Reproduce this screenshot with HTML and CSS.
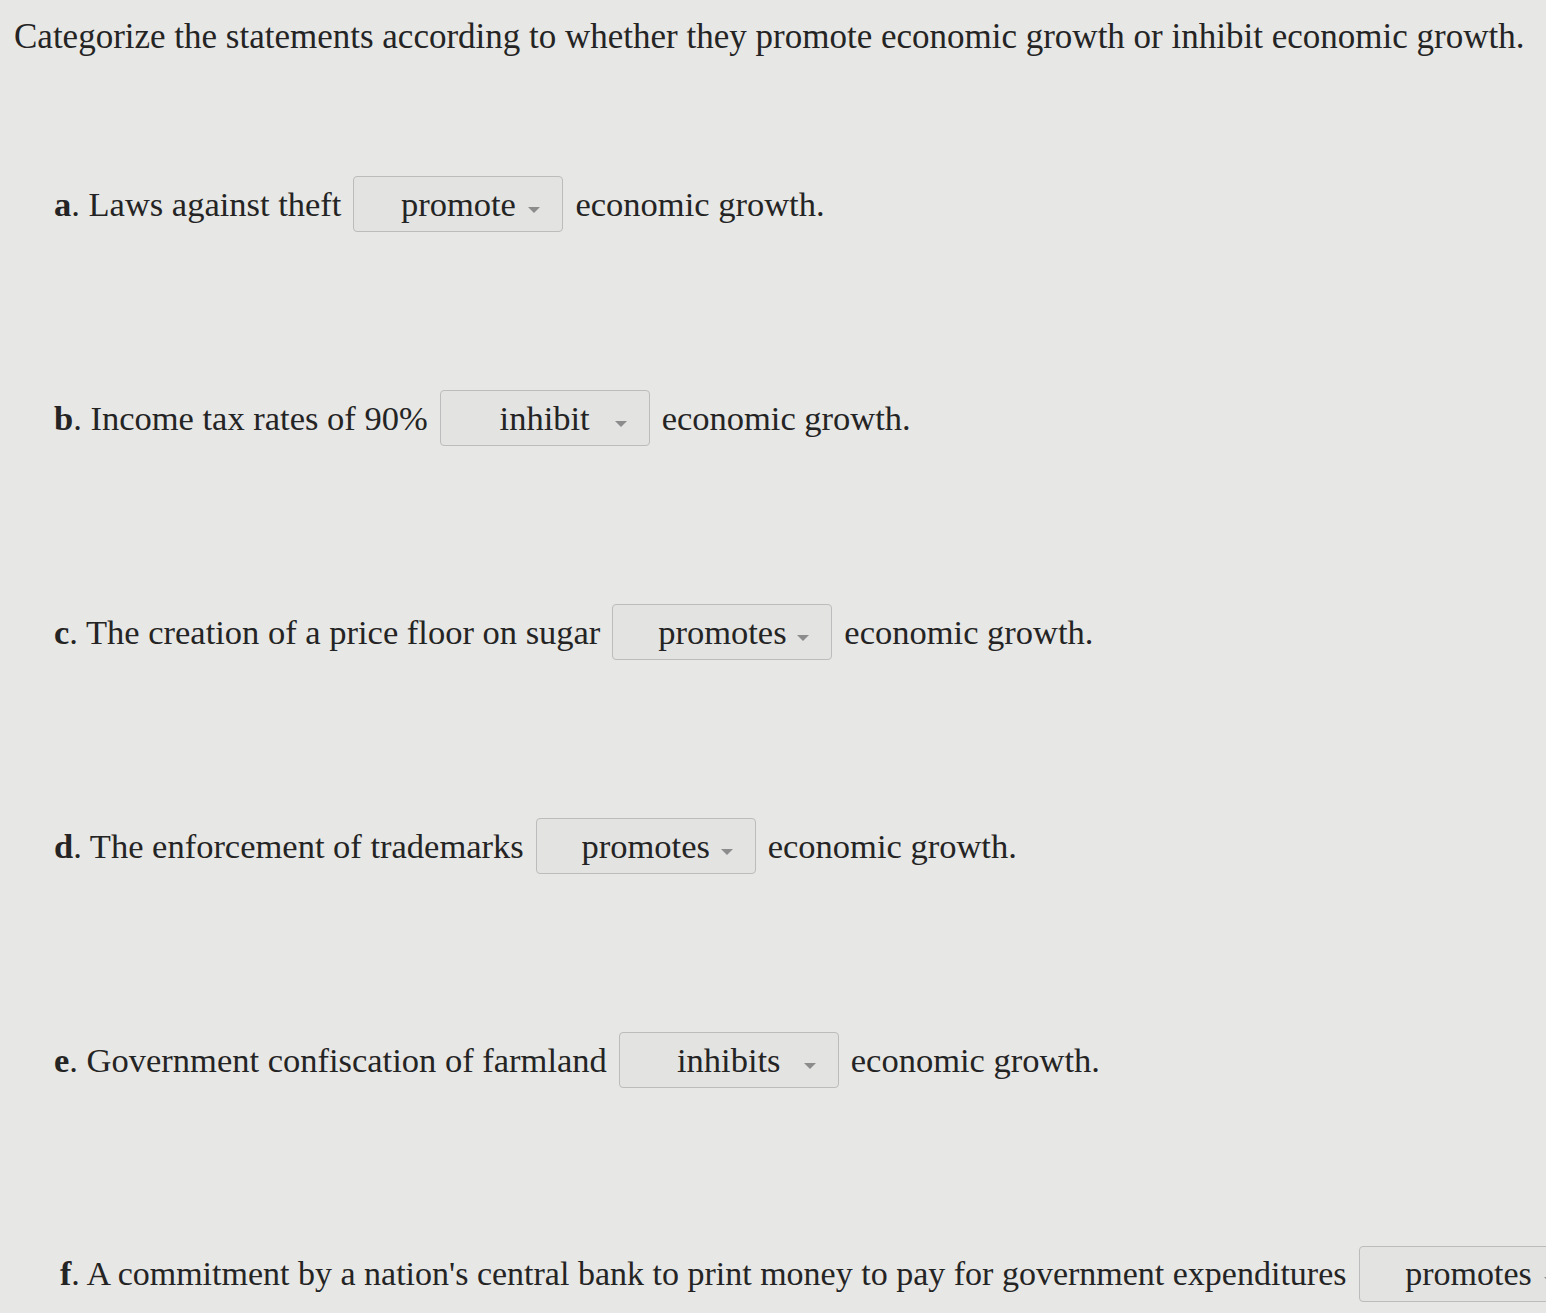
FILE: index.html
```html
<!DOCTYPE html>
<html lang="en">
<head>
<meta charset="utf-8">
<title>Categorize the statements</title>
<link rel="stylesheet" href="styles.css">
</head>
<body>
<main class="page">
  <h1 class="prompt">Categorize the statements according to whether they promote economic growth or inhibit economic growth.</h1>
  <div class="rows">
    <div class="row"><span><b>a</b>. Laws against theft</span><span class="dd"><span class="dd-text">promote</span><span class="caret"></span></span><span>economic growth.</span></div>
    <div class="row"><span><b>b</b>. Income tax rates of 90%</span><span class="dd"><span class="dd-text">inhibit</span><span class="caret"></span></span><span>economic growth.</span></div>
    <div class="row"><span><b>c</b>. The creation of a price floor on sugar</span><span class="dd wide"><span class="dd-text">promotes</span><span class="caret"></span></span><span>economic growth.</span></div>
    <div class="row"><span><b>d</b>. The enforcement of trademarks</span><span class="dd wide"><span class="dd-text">promotes</span><span class="caret"></span></span><span>economic growth.</span></div>
    <div class="row"><span><b>e</b>. Government confiscation of farmland</span><span class="dd wide"><span class="dd-text">inhibits</span><span class="caret"></span></span><span>economic growth.</span></div>
    <div class="row row-f"><span><b>f</b>. A commitment by a nation's central bank to print money to pay for government expenditures</span><span class="dd wide"><span class="dd-text">promotes</span><span class="caret"></span></span></div>
  </div>
</main>
</body>
</html>
```

FILE: styles.css
```css
html, body {
  margin: 0;
  padding: 0;
  background: #e7e7e5;
  overflow: hidden;
}
body {
  width: 1546px;
  height: 1313px;
  font-family: "Liberation Serif", "Times New Roman", serif;
  color: #242424;
}
.page {
  padding: 17px 0 0 14px;
}
.prompt {
  margin: 0;
  font-weight: normal;
  font-size: 35px;
  line-height: 40px;
  white-space: nowrap;
}
.rows {
  display: flex;
  flex-direction: column;
  gap: 158px;
  margin-top: 119px;
  padding-left: 40px;
}
.row {
  display: flex;
  align-items: center;
  gap: 12px;
  height: 56px;
  font-size: 34.5px;
  white-space: nowrap;
}
.row-f {
  font-size: 34px;
  padding-left: 6px;
}
.row b {
  font-weight: bold;
}
.dd {
  box-sizing: border-box;
  display: grid;
  grid-template-areas: "cell";
  align-items: center;
  width: 210px;
  height: 56px;
  border: 1.5px solid #bcbcbc;
  border-radius: 4px;
  background: #e3e3e2;
  flex-shrink: 0;
}
.dd.wide {
  width: 220px;
}
.dd-text {
  grid-area: cell;
  text-align: center;
}
.caret {
  grid-area: cell;
  justify-self: end;
  margin: 12px 22px 0 0;
  width: 0;
  height: 0;
  border-left: 6px solid transparent;
  border-right: 6px solid transparent;
  border-top: 6px solid #8c8c8c;
}
```
